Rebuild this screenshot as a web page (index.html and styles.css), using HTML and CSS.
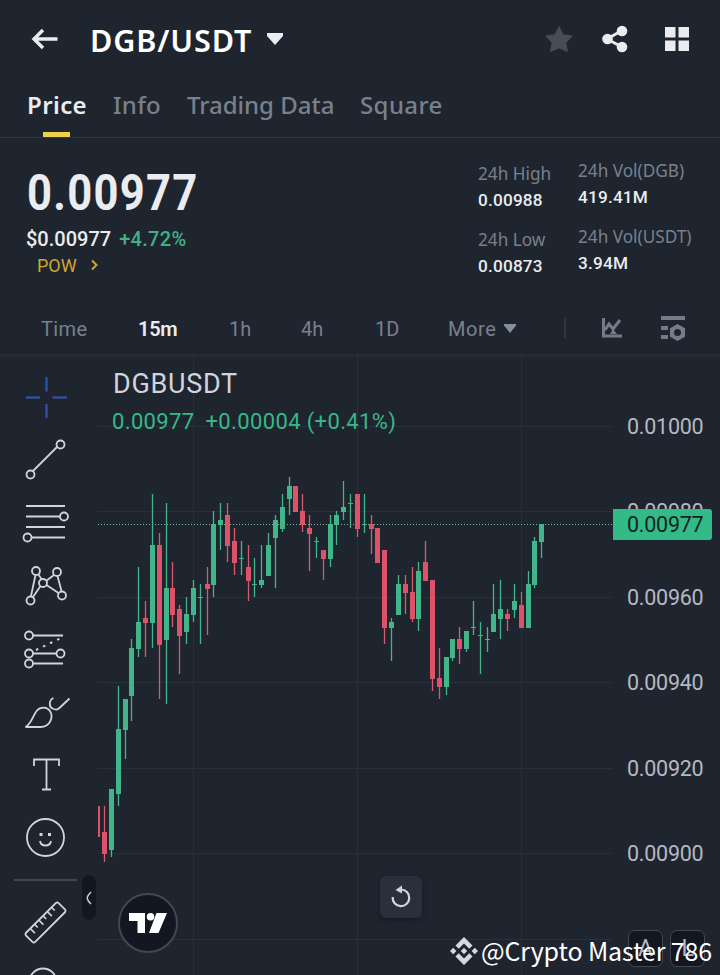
FILE: index.html
```html
<!DOCTYPE html>
<html lang="en">
<head>
<meta charset="utf-8">
<title>DGB/USDT</title>
<link rel="stylesheet" href="styles.css">
</head>
<body>
<div class="app">
  <header class="topbar">
    <svg class="back" width="28" height="22" viewBox="0 0 28 22"><path d="M26.500 11H3M12 2 3 11l9 9" fill="none" stroke="#eaecef" stroke-width="3.400"/></svg>
    <h1 class="pair">DGB/USDT</h1>
    <svg class="caret" width="18" height="14" viewBox="0 0 18 14"><path d="M1 1h16v3L9 13 1 4z" fill="#eaecef"/></svg>
    <div class="actions">
      <svg width="28" height="28" viewBox="0 0 28 28"><path d="m14 2 3.900 8 8.600 1.200-6 6.300 1.600 8.500-8.100-3.500L5.900 26l1.600-8.500-6-6.300 8.600-1.200z" fill="#474d57" stroke="#474d57" stroke-width="1.500" stroke-linejoin="round"/></svg>
      <svg width="28" height="28" viewBox="0 0 28 28"><g fill="#eaecef"><path d="m6 14 15-8.500M6 14l15 8" stroke="#eaecef" stroke-width="3"/><circle cx="6.500" cy="14" r="5.300"/><circle cx="21" cy="6" r="5.300"/><circle cx="21" cy="22" r="5.300"/></g></svg>
      <svg width="26" height="26" viewBox="0 0 26 26"><path d="M1 1h10.500v10.500H1zM14.500 1H25v10.500H14.500zM1 14.500h10.500V25H1zM14.500 14.500H25V25H14.500z" fill="#eaecef"/></svg>
    </div>
  </header>

  <nav class="tabs">
    <span class="tab active">Price</span><span class="tab info">Info</span><span class="tab trading">Trading Data</span><span class="tab square">Square</span>
  </nav>

  <section class="summary">
    <div class="quote">
      <div class="last">0.00977</div>
      <div class="fiat"><span>$0.00977</span><span class="up">+4.72%</span></div>
      <div class="tag"><span>POW</span><svg width="9" height="12" viewBox="0 0 9 12"><path d="m2 1.500 4.500 4.500L2 10.500" fill="none" stroke="#d0a62f" stroke-width="2"/></svg></div>
    </div>
    <dl class="stats low-high">
      <dt>24h High</dt><dd>0.00988</dd>
      <dt>24h Low</dt><dd>0.00873</dd>
    </dl>
    <dl class="stats volume">
      <dt>24h Vol(DGB)</dt><dd>419.41M</dd>
      <dt>24h Vol(USDT)</dt><dd>3.94M</dd>
    </dl>
  </section>

  <nav class="intervals">
    <span class="time">Time</span><span class="on">15m</span><span class="h1">1h</span><span class="h4">4h</span><span class="d1">1D</span><span class="more">More</span>
    <svg class="more-caret" width="14" height="10" viewBox="0 0 14 10"><path d="M1 0h12v1.500L7 9 1 1.500z" fill="#848e9c"/></svg>
    <i class="divider"></i>
    <svg class="indicator" width="22" height="22" viewBox="0 0 22 22"><path d="M2.500 1v18H21M4 13l4-6 4 5 7-9" fill="none" stroke="#767c87" stroke-width="3"/><path d="m9 17 3-5 4 5z" fill="#767c87"/></svg>
    <svg class="settings" width="26" height="28" viewBox="0 0 26 28"><g fill="#767c87"><path d="M1 2h24v4H1zM1 12h7v4H1zM1 21h7v4H1z"/><path fill-rule="evenodd" d="m17.500 10 7.500 4.300v8.400L17.500 27 10 22.700v-8.400zm0 5a3.500 3.500 0 1 0 0 7 3.500 3.500 0 0 0 0-7z"/></g></svg>
  </nav>

  <main class="chart">
    <aside>
      <svg class="tools" width="98" height="618" viewBox="0 357 98 618" fill="none" stroke="#d1d4dc" stroke-width="1.800">
        <path d="M46.500 377v14.500M46.500 404v14M26 397.500h14M52.500 397.500H67" stroke="#3356b5" stroke-width="2"/>
        <g><path d="m33 471 24-24"/><circle cx="30.500" cy="474.500" r="4"/><circle cx="60.500" cy="444.500" r="4"/></g>
        <g><path d="M26 506h39M26 516.500h34M26 527h39M31 537.500h34"/><circle cx="64" cy="516.500" r="4"/><circle cx="27.500" cy="537.500" r="4"/></g>
        <g><path d="m35.500 575-4.500 21M38 574l3.500 5M33 597l7.500-11M46 581l8-6M57.500 576l4 15M46.500 585l12 8"/><circle cx="36" cy="571" r="4"/><circle cx="57" cy="572" r="4"/><circle cx="43" cy="583" r="4"/><circle cx="30.500" cy="600.500" r="4"/><circle cx="62" cy="595.500" r="4"/></g>
        <g><path d="M33 635.500h30M33 653.500h23M33 663.500h30"/><circle cx="29" cy="635.500" r="4"/><circle cx="29" cy="653.500" r="4"/><circle cx="60.500" cy="653.500" r="4"/><circle cx="29" cy="663.500" r="4"/><path d="m36 650 25-12" stroke-dasharray="2.500 5.300" stroke-width="2"/></g>
        <path d="M25.500 727c6-3 7.500-12 11.500-16.500 3.500-4 10-4 13 .500 3.500 5.500.500 16-9.500 16zM53.500 698c-5 2-4.500 9-1 10.500 4 2 5.500 1 8-1.500l9-8.500"/>
        <path d="M34 766v-6.500h25v6.500M46.500 760v29.500M42 789.500h9"/>
        <g><circle cx="45.500" cy="837.500" r="18.500"/><path d="M40 841c1 6 10 6 11 0"/><path d="M39.500 834.500h3M48 834.500h3" stroke-width="3"/></g>
        <path d="M14 880h63" stroke="#434750" stroke-width="2"/>
        <g transform="translate(45.500 922.500) rotate(-45)"><rect x="-23" y="-6.500" width="46" height="13" rx="2"/><path d="M-15-6v6M-9-6v4M-3-6v6M3-6v4M9-6v6M15-6v4" stroke-width="1.600"/></g>
        <circle cx="43" cy="982" r="13.500"/>
      </svg>
      <div class="fold"><svg width="8" height="14" viewBox="0 0 8 14"><path d="M6 1C1 6 1 8 6 13" fill="none" stroke="#c9ccd3" stroke-width="1.500"/></svg></div>
    </aside>

    <div class="plot">
      <svg class="candles" width="515" height="621" viewBox="98 354 515 621" fill="none">
        <path d="M98 426.500h514M98 511.500h514M98 597.500h514M98 682.500h514M98 768.500h514M98 853.500h514M98 939.500h514M193.500 354v621M357.500 354v621M521.500 354v621" stroke="#29303a" stroke-width="1"/>
        <path d="M98 524.500h515" stroke="#6fb8a2" stroke-dasharray="1 2"/>
        <path class="up-wick" d="M111.500 789V857M118.500 686V806M125.500 699V759M131.500 639V721M138.500 567V657M152.500 494V648M166.500 503V704M186.500 597V644M193.500 580V622M200.500 584V644M213.500 511V597M220.500 503V550M241.500 541V575M254.500 558V597M261.500 545V588M268.500 533V576M275.500 515V588M282.500 494V532M289.500 477V515M316.500 537V558M330.500 515V567M336.500 511V545M343.500 481V520M350.500 494V528M364.500 494V533M391.500 618V661M398.500 575V615M418.500 562V631M446.500 657V695M452.500 639V661M466.500 631V652M473.500 601V635M480.500 622V674M487.500 627V652M493.500 584V632M500.500 580V639M514.500 584V618M528.500 571V628M534.500 537V588M541.500 524V558"/>
        <path class="down-wick" d="M104.500 806V862M145.500 601V657M159.500 533V699M172.500 562V627M179.500 605V674M207.500 567V635M227.500 503V562M234.500 528V575M248.500 545V601M302.500 494V532M309.500 515V571M323.500 550V580M357.500 494V537M371.500 515V554M384.500 550V644M405.500 575V614M412.500 567V622M425.500 541V581M432.500 580V691M439.500 648V699M459.500 627V664M507.500 609V631M521.500 592V628"/>
        <path class="up-body" d="M111.500 789V850M118.500 729V794M125.500 699V730M131.500 648V696M138.500 622V649M152.500 545V623M166.500 588V640M186.500 614V632M193.500 588V615M213.500 524V585M220.500 520V525M261.500 580V585M268.500 545V576M275.500 520V538M282.500 507V529M289.500 486V499M330.500 524V559M336.500 515V525M343.500 507V512M391.500 622V628M398.500 584V615M418.500 571V619M446.500 657V687M452.500 639V658M466.500 631V649M493.500 614V632M500.500 609V619M514.500 601V610M528.500 584V628M534.500 541V585M541.500 524V542"/>
        <path class="doji" d="M198 597.500h5M239 558.500h5M252 584.500h5M314 541.500h5M348 503.500h5M362 524.500h5M471 627.500h5M478 635.500h5M485 639.500h5"/>
        <path class="down-body" d="M104.500 832V854M145.500 618V623M159.500 545V645M172.500 588V615M179.500 609V636M207.500 584V589M227.500 515V546M234.500 541V563M248.500 567V581M295.500 486V512M302.500 511V525M309.500 528V534M323.500 550V559M357.500 494V529M371.500 524V529M377.500 528V563M384.500 550V628M405.500 584V593M412.500 592V619M425.500 562V581M432.500 580V679M439.500 678V687M459.500 639V649M507.500 614V619M521.500 605V628"/>
        <path d="M99 806v31" stroke="#d8566a" stroke-width="2"/>
      </svg>
      <div class="legend">
        <div class="symbol">DGBUSDT</div>
        <div class="change"><span>0.00977</span><span>+0.00004 (+0.41%)</span></div>
      </div>
      <div class="tv"><svg width="38" height="20" viewBox="0 0 38 20" fill="#fff"><path d="M0 0h16v20H8.500V8H0zM27.500 0H38l-8.500 20H20z"/><circle cx="21.500" cy="3.800" r="3.800"/></svg></div>
      <div class="reset"><svg width="22" height="24" viewBox="0 0 22 24"><path d="M2.700 12a8.300 8.300 0 1 0 8.300-7.500" fill="none" stroke="#d1d4dc" stroke-width="2.200"/><path d="M12 .500v8L5.500 5z" fill="#d1d4dc"/></svg></div>
    </div>

    <div class="axis">
      <span>0.01000</span><span>0.00980</span><span>0.00960</span><span>0.00940</span><span>0.00920</span><span>0.00900</span>
      <div class="current">0.00977</div>
      <div class="scale"><b>A</b><b>L</b></div>
    </div>
    <div class="credit">
      <svg width="28" height="28" viewBox="0 0 28 28" fill="#d5d8df"><path d="m14 0 8.500 8.500-3.200 3.200L14 6.400l-5.300 5.300-3.200-3.200zM14 28l-8.500-8.500 3.200-3.200 5.300 5.300 5.300-5.300 3.200 3.200zM14 10.800l3.200 3.200-3.200 3.200-3.200-3.200zM3.200 10.800 6.400 14l-3.200 3.200L0 14zM24.800 10.800 28 14l-3.200 3.200-3.200-3.200z"/></svg>
      <span>@Crypto Master 786</span>
    </div>
  </main>
</div>
</body>
</html>
```
FILE: styles.css
```css
* { box-sizing: border-box; }
body { margin: 0; background: #1f252f; color: #eaecef; font-family: "Noto Sans", sans-serif; }
svg { display: block; flex: none; }
.app { width: 720px; height: 975px; overflow: hidden; white-space: nowrap; }

.topbar { display: flex; align-items: center; height: 78px; padding: 0 31px 0 31px; }
.back { margin-top: -1px; }
.pair { margin: 2px 0 0 31px; width: 163px; font-size: 30.500px; font-weight: 650; line-height: 40px; letter-spacing: .9px; color: #fff; }
.caret { margin-left: 13px; }
.actions { display: flex; align-items: center; gap: 32px; margin: -1px -1px 0 auto; }
.actions svg:nth-child(2) { margin-right: 3px; margin-left: -4px; }

.tabs { display: flex; height: 60px; padding: 9px 0 0 27px; border-bottom: 1px solid #303640; font-size: 24px; font-weight: 500; line-height: 36px; color: #79808c; }
.tab { position: relative; }
.active { width: 59px; margin-right: 27px; color: #eaecef; font-weight: 600; letter-spacing: .4px; }
.active::after { content: ""; position: absolute; left: 16px; top: 45px; width: 27px; height: 5px; background: #f0d04b; }
.info { width: 47px; margin-right: 27px; letter-spacing: .3px; }
.trading { width: 147px; margin-right: 26px; }
.square { letter-spacing: .4px; }

.summary { display: flex; height: 165px; padding-left: 27px; }
.quote { width: 451px; font-family: Roboto, sans-serif; }
.last { width: max-content; height: 58px; margin-top: 26px; font-size: 50.500px; font-weight: 700; line-height: 58px; letter-spacing: 1.500px; transform: scaleX(.862); transform-origin: left; }
.fiat { display: flex; gap: 8px; height: 28px; margin: 3px 0 0 -1px; font-size: 20px; font-weight: 500; line-height: 28px; }
.up { color: #3fb185; letter-spacing: .3px; }
.tag { display: flex; align-items: center; gap: 13px; margin: 0 0 0 10px; height: 24px; font-size: 18px; color: #d0a62f; }
.stats { width: 100px; margin: 23px 0 0; font-size: 17.200px; line-height: 26px; }
.volume { margin-top: 20px; width: 125px; }
.stats dt { color: #79808c; }
.stats dd { margin: 0 0 14px; font-family: Roboto, sans-serif; font-weight: 500; letter-spacing: .2px; }

.intervals { display: flex; align-items: center; height: 51px; padding-left: 41px; font-family: Roboto, sans-serif; font-size: 20px; color: #79808c; }
.time { width: 97px; letter-spacing: .4px; }
.on { width: 91px; color: #eaecef; font-weight: 600; letter-spacing: -.3px; }
.h1 { width: 72px; }
.h4 { width: 74px; }
.d1 { width: 73px; }
.more { width: 55px; letter-spacing: .6px; }
.divider { width: 2px; height: 21px; margin: -2px 0 0 47px; background: #303640; }
.indicator { margin: -2px 0 0 35px; }
.settings { margin: -2px 0 0 37px; }

.chart { position: relative; display: grid; grid-template-columns: 98px 515px 107px; height: 621px; border-top: 3px solid #252b35; font-family: Roboto, sans-serif; }
aside, .plot, .axis { position: relative; height: 621px; margin-top: -3px; }
.tools { margin-top: 3px; }
.fold { position: absolute; left: 82px; top: 521px; width: 14px; height: 45px; border-radius: 7px; background: #131722; display: grid; place-items: center; }
.up-wick { stroke: #46b48b; stroke-width: 1.300; }
.down-wick { stroke: #d65a6d; stroke-width: 1.300; }
.up-body { stroke: #42b68a; stroke-width: 5; }
.doji { stroke: #42b68a; stroke-width: 1.200; }
.down-body { stroke: #dc5268; stroke-width: 5; }
.legend { position: absolute; left: 15px; top: 13px; color: #d1d4dc; }
.symbol { font-size: 27px; line-height: 34px; letter-spacing: .7px; }
.change { display: flex; gap: 11px; margin: 6px 0 0 -1px; color: #36b987; font-size: 22px; line-height: 30px; letter-spacing: .36px; }
.tv { position: absolute; left: 20px; top: 539px; width: 60px; height: 60px; border: 2px solid #434750; border-radius: 50%; background: #131722; display: grid; place-items: center; }
.reset { position: absolute; left: 282px; top: 522px; width: 42px; height: 42px; border-radius: 6px; background: #2a303b; box-shadow: 0 2px 5px #141922; display: grid; place-items: center; }
.axis { padding: 29px 0 0 14px; color: #b5b8c2; font-size: 21.500px; letter-spacing: -.25px; }
.axis > span { display: block; height: 85.400px; line-height: 87px; }
.current { position: absolute; left: 0; top: 155px; width: 99px; height: 31px; padding-left: 14px; border-radius: 0 3px 3px 0; background: #32ba87; color: #16251f; line-height: 32px; }
.scale { position: absolute; left: 15px; top: 576px; display: flex; gap: 7px; }
.scale b { width: 35px; height: 37px; border: 1px solid #434750; border-radius: 7px; background: #131722; font-size: 23px; font-weight: 400; line-height: 36px; text-align: center; }
.credit { position: absolute; left: 450px; top: 577px; display: flex; align-items: center; gap: 3px; color: #fff; font-family: "Noto Sans CJK SC", sans-serif; font-size: 25px; line-height: 34px; letter-spacing: -.12px; }
.credit svg { margin-top: 1px; }
.credit span { margin-top: -1px; }
```
